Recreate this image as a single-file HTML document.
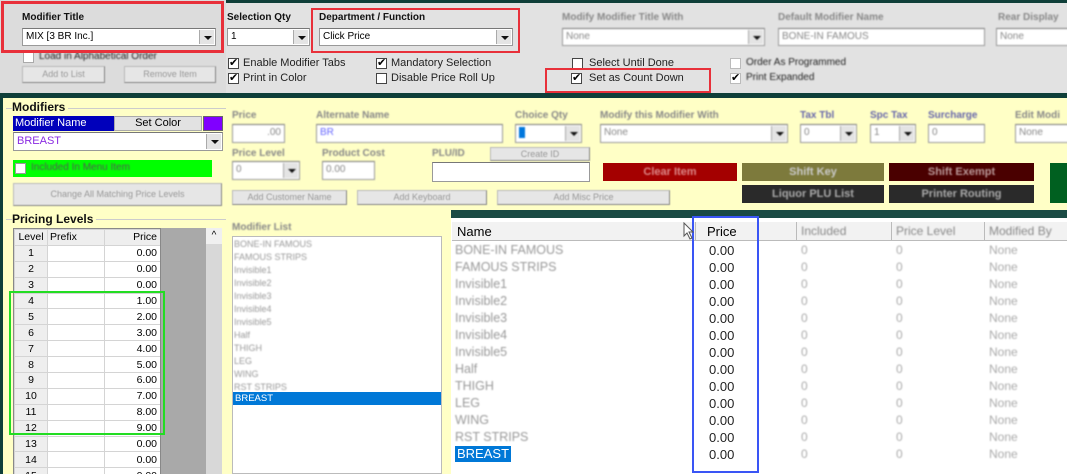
<!DOCTYPE html>
<html><head><meta charset="utf-8"><style>
*{box-sizing:border-box;margin:0;padding:0}
html{width:1067px;height:474px;overflow:hidden}
body{width:1067px;height:474px;overflow:hidden;background:#0f3f39;font-family:"Liberation Sans",sans-serif;font-size:11px;color:#000;position:relative}
.a{position:absolute}
.lbl{position:absolute;font-weight:bold;font-size:10px;color:#111}
.bl{filter:blur(0.7px);color:#888}
.box{position:absolute;background:#fff;border:1px solid #999;border-top-color:#777;font-size:10px;padding:2px 3px;white-space:nowrap;overflow:hidden}
.dd{position:absolute;right:1px;top:1px;bottom:1px;width:15px;background:#e4e4e4;border-left:1px solid #aaa}
.dd:after{content:"";position:absolute;left:4px;top:6px;border:4px solid transparent;border-top:4px solid #111}
.btn{position:absolute;background:#e6e6e6;border:1px solid #bbb;border-right-color:#888;border-bottom-color:#888;font-size:9px;color:#999;text-align:center;filter:blur(0.5px)}
.cb{position:absolute;width:11px;height:11px;border:1px solid #444;background:#fff}
.cb.on:after{content:"✔";position:absolute;left:0;top:-3px;font-size:11px;color:#000}
.ct{position:absolute;font-size:11px;color:#222}
.cbtn{position:absolute;color:#ccc;text-align:center;font-size:11px;font-weight:bold;filter:blur(0.8px);line-height:18px}
table{border-collapse:collapse;table-layout:fixed}
td{padding:0;height:15.9px;line-height:14px;border:1px solid #d4d4d4}
td.l{background:#eee;text-align:center}
td.p{text-align:right;padding-right:3px}
</style></head><body>
<div class="a" style="left:0;top:3px;width:1067px;height:90px;background:#e2e2e2"></div>
<div class="a" style="left:0;top:0;width:226px;height:93px;background:#dcdcdc"></div>
<div class="lbl" style="left:22px;top:12px">Modifier Title</div>
<div class="box" style="left:22px;top:28px;width:194px;height:18px">MIX [3 BR Inc.]<div class="dd"></div></div>
<div class="cb" style="left:23px;top:52px;border-color:#aaa"></div><div class="ct bl" style="left:39px;top:51px;font-size:10px">Load in Alphabetical Order</div>
<div class="btn" style="left:22px;top:66px;width:83px;height:17px;line-height:15px">Add to List</div>
<div class="btn" style="left:124px;top:66px;width:92px;height:17px;line-height:15px">Remove Item</div>
<div class="a" style="left:1px;top:1px;width:223px;height:52px;border:3px solid #e8303a"></div>

<div class="lbl" style="left:227px;top:12px">Selection Qty</div>
<div class="box" style="left:227px;top:28px;width:83px;height:18px">1<div class="dd"></div></div>
<div class="lbl" style="left:319px;top:12px">Department / Function</div>
<div class="box" style="left:319px;top:28px;width:194px;height:18px">Click Price<div class="dd"></div></div>
<div class="a" style="left:311px;top:8px;width:209px;height:45px;border:2px solid #e8303a"></div>

<div class="lbl bl" style="left:562px;top:12px">Modify Modifier Title With</div>
<div class="box bl" style="left:562px;top:28px;width:203px;height:18px">None<div class="dd"></div></div>
<div class="lbl bl" style="left:778px;top:12px">Default Modifier Name</div>
<div class="box bl" style="left:778px;top:28px;width:207px;height:18px">BONE-IN FAMOUS</div>
<div class="lbl bl" style="left:998px;top:12px">Rear Display</div>
<div class="box bl" style="left:996px;top:28px;width:75px;height:18px">None</div>

<div class="cb on" style="left:228px;top:58px"></div><div class="ct" style="left:243px;top:57px">Enable Modifier Tabs</div>
<div class="cb on" style="left:228px;top:73px"></div><div class="ct" style="left:243px;top:72px">Print in Color</div>
<div class="cb on" style="left:376px;top:58px"></div><div class="ct" style="left:391px;top:57px">Mandatory Selection</div>
<div class="cb" style="left:376px;top:73px"></div><div class="ct" style="left:391px;top:72px">Disable Price Roll Up</div>
<div class="cb" style="left:572px;top:58px"></div><div class="ct" style="left:589px;top:57px">Select Until Done</div>
<div class="cb on" style="left:571px;top:73px"></div><div class="ct" style="left:589px;top:72px">Set as Count Down</div>
<div class="a" style="left:545px;top:68px;width:166px;height:25px;border:2px solid #e8303a"></div>
<div class="cb" style="left:730px;top:58px;border-color:#bbb"></div><div class="ct bl" style="left:746px;top:57px;font-size:10px">Order As Programmed</div>
<div class="cb on" style="left:730px;top:73px;border-color:#bbb;color:#999"></div><div class="ct bl" style="left:746px;top:72px;font-size:10px">Print Expanded</div>

<div class="a" style="left:3px;top:98px;width:225px;height:376px;background:#ffffc6"></div>
<div class="a" style="left:6px;top:108px;width:220px;height:1px;background:#ccc"></div>
<div class="lbl" style="left:12px;top:100px;font-size:12px;background:#ffffc6;padding-right:3px">Modifiers</div>
<div class="a" style="left:13px;top:116px;width:101px;height:15px;background:#0000bb;color:#fff;font-size:11px;padding-left:2px;line-height:15px">Modifier Name</div>
<div class="a" style="left:114px;top:116px;width:88px;height:15px;background:#e2e2e2;border:1px solid #aaa;font-size:11px;text-align:center;line-height:13px">Set Color</div>
<div class="a" style="left:203px;top:116px;width:20px;height:15px;background:#8000ff;border:1px solid #666"></div>
<div class="box" style="left:13px;top:132px;width:210px;height:19px;color:#8a2be2;font-size:11px">BREAST<div class="dd"></div></div>
<div class="a" style="left:13px;top:160px;width:199px;height:17px;background:#00ff00"></div>
<div class="cb" style="left:15px;top:163px;border-color:#999"></div>
<div class="ct bl" style="left:31px;top:162px;font-size:10px;color:#555">Included In Menu Item</div>
<div class="btn" style="left:13px;top:183px;width:209px;height:23px;line-height:21px">Change All Matching Price Levels</div>
<div class="a" style="left:6px;top:219px;width:220px;height:1px;background:#ccc"></div>
<div class="lbl" style="left:12px;top:212px;font-size:12px;background:#ffffc6;padding-right:3px">Pricing Levels</div>
<div class="a" style="left:160px;top:228px;width:46px;height:246px;background:#a9a9a9"></div>
<div class="a" style="left:206px;top:228px;width:16px;height:246px;background:#d8d8d8"></div>
<div class="a" style="left:206px;top:228px;width:16px;height:16px;background:#f0f0f0;text-align:center;font-size:10px;line-height:16px">^</div>
<div class="a" style="left:13px;top:228px;width:148px;height:246px;overflow:hidden;background:#fff;border:1px solid #888;border-bottom:none">
<table style="width:147px;font-size:10.5px">
<colgroup><col style="width:33px"><col style="width:57px"><col></colgroup>
<tr style="background:#eee"><td class="l">Level</td><td style="padding-left:2px">Prefix</td><td class="p">Price</td></tr>
<tr><td class="l">1</td><td></td><td class="p">0.00</td></tr>
<tr><td class="l">2</td><td></td><td class="p">0.00</td></tr>
<tr><td class="l">3</td><td></td><td class="p">0.00</td></tr>
<tr><td class="l">4</td><td></td><td class="p">1.00</td></tr>
<tr><td class="l">5</td><td></td><td class="p">2.00</td></tr>
<tr><td class="l">6</td><td></td><td class="p">3.00</td></tr>
<tr><td class="l">7</td><td></td><td class="p">4.00</td></tr>
<tr><td class="l">8</td><td></td><td class="p">5.00</td></tr>
<tr><td class="l">9</td><td></td><td class="p">6.00</td></tr>
<tr><td class="l">10</td><td></td><td class="p">7.00</td></tr>
<tr><td class="l">11</td><td></td><td class="p">8.00</td></tr>
<tr><td class="l">12</td><td></td><td class="p">9.00</td></tr>
<tr><td class="l">13</td><td></td><td class="p">0.00</td></tr>
<tr><td class="l">14</td><td></td><td class="p">0.00</td></tr>
<tr><td class="l">15</td><td></td><td class="p">0.00</td></tr>
</table></div>
<div class="a" style="left:9px;top:291px;width:156px;height:144px;border:2px solid #22dd22"></div>

<div class="a" style="left:228px;top:98px;width:839px;height:112px;background:#ffffc6"></div>
<div class="a" style="left:228px;top:210px;width:223px;height:264px;background:#ffffc6"></div>
<div class="a" style="left:451px;top:210px;width:616px;height:8px;background:#1a4a44"></div>
<div class="lbl bl" style="left:232px;top:110px">Price</div>
<div class="box bl" style="left:232px;top:124px;width:53px;height:19px;text-align:right">.00</div>
<div class="lbl bl" style="left:316px;top:110px">Alternate Name</div>
<div class="box bl" style="left:316px;top:124px;width:187px;height:19px;color:#66f">BR</div>
<div class="lbl bl" style="left:515px;top:110px">Choice Qty</div>
<div class="box bl" style="left:515px;top:124px;width:67px;height:19px"><span style="background:#07d;color:#07d">1</span><div class="dd"></div></div>
<div class="lbl bl" style="left:600px;top:110px">Modify this Modifier With</div>
<div class="box bl" style="left:600px;top:124px;width:188px;height:19px">None<div class="dd"></div></div>
<div class="lbl bl" style="left:800px;top:110px;color:#66a">Tax Tbl</div>
<div class="box bl" style="left:800px;top:124px;width:57px;height:19px">0<div class="dd"></div></div>
<div class="lbl bl" style="left:870px;top:110px;color:#66a">Spc Tax</div>
<div class="box bl" style="left:870px;top:124px;width:46px;height:19px">1<div class="dd"></div></div>
<div class="lbl bl" style="left:928px;top:110px;color:#66a">Surcharge</div>
<div class="box bl" style="left:928px;top:124px;width:57px;height:19px">0</div>
<div class="lbl bl" style="left:1015px;top:110px">Edit Modi</div>
<div class="box bl" style="left:1015px;top:124px;width:60px;height:19px">None</div>

<div class="lbl bl" style="left:232px;top:148px">Price Level</div>
<div class="box bl" style="left:232px;top:161px;width:68px;height:19px">0<div class="dd"></div></div>
<div class="lbl bl" style="left:322px;top:148px">Product Cost</div>
<div class="box bl" style="left:322px;top:161px;width:53px;height:19px">0.00</div>
<div class="lbl bl" style="left:432px;top:148px">PLU/ID</div>
<div class="btn" style="left:490px;top:147px;width:100px;height:14px;line-height:12px">Create ID</div>
<div class="box" style="left:432px;top:162px;width:158px;height:20px"></div>
<div class="btn" style="left:232px;top:190px;width:115px;height:15px;line-height:13px">Add Customer Name</div>
<div class="btn" style="left:357px;top:190px;width:130px;height:15px;line-height:13px">Add Keyboard</div>
<div class="btn" style="left:497px;top:190px;width:173px;height:15px;line-height:13px">Add Misc Price</div>

<div class="a" style="left:603px;top:163px;width:134px;height:18px;background:#a40000"></div><div class="cbtn" style="left:603px;top:163px;width:134px;color:#d88">Clear Item</div>
<div class="a" style="left:742px;top:163px;width:142px;height:18px;background:#7d7a3c"></div><div class="cbtn" style="left:742px;top:163px;width:142px">Shift Key</div>
<div class="a" style="left:889px;top:163px;width:145px;height:18px;background:#4a0000"></div><div class="cbtn" style="left:889px;top:163px;width:145px;color:#b99">Shift Exempt</div>
<div class="a" style="left:742px;top:185px;width:142px;height:18px;background:#2a2a2a"></div><div class="cbtn" style="left:742px;top:185px;width:142px;color:#aaa">Liquor PLU List</div>
<div class="a" style="left:889px;top:185px;width:145px;height:18px;background:#2a2a2a"></div><div class="cbtn" style="left:889px;top:185px;width:145px;color:#aaa">Printer Routing</div>
<div class="a" style="left:1050px;top:163px;width:17px;height:40px;background:#006020"></div>

<div class="lbl bl" style="left:232px;top:222px">Modifier List</div>
<div class="a" style="left:232px;top:236px;width:210px;height:238px;background:#fff;border:1px solid #bbb"></div>
<div class="a bl" style="left:234px;top:238px;font-size:9px;line-height:13px;color:#999">BONE-IN FAMOUS<br>FAMOUS STRIPS<br>Invisible1<br>Invisible2<br>Invisible3<br>Invisible4<br>Invisible5<br>Half<br>THIGH<br>LEG<br>WING<br>RST STRIPS</div>
<div class="a" style="left:233px;top:392px;width:208px;height:13px;background:#0078d7;color:#fff;font-size:9.5px;padding-left:2px;line-height:13px">BREAST</div>

<div class="a" style="left:451px;top:218px;width:616px;height:256px;background:#fff"></div>
<div class="a" style="left:452px;top:222px;width:615px;height:19px;background:#f2f2f2;border-bottom:1px solid #bbb"></div>
<div class="a" style="left:457px;top:224px;font-size:13px">Name</div>
<div class="a" style="left:695px;top:222px;width:1px;height:19px;background:#bbb"></div>
<div class="a" style="left:707px;top:224px;font-size:13px">Price</div>
<div class="a" style="left:796px;top:222px;width:1px;height:19px;background:#bbb"></div>
<div class="a bl" style="left:801px;top:224px;font-size:12px">Included</div>
<div class="a" style="left:891px;top:222px;width:1px;height:19px;background:#bbb"></div>
<div class="a bl" style="left:896px;top:224px;font-size:12px">Price Level</div>
<div class="a" style="left:984px;top:222px;width:1px;height:19px;background:#bbb"></div>
<div class="a bl" style="left:989px;top:224px;font-size:12px">Modified By</div>
<div class="a bl" style="left:455px;top:242px;font-size:12.5px;line-height:17px;color:#999">BONE-IN FAMOUS<br>FAMOUS STRIPS<br>Invisible1<br>Invisible2<br>Invisible3<br>Invisible4<br>Invisible5<br>Half<br>THIGH<br>LEG<br>WING<br>RST STRIPS</div>
<div class="a" style="left:455px;top:446px;font-size:13px;background:#0078d7;color:#fff;padding:0 2px;line-height:16px">BREAST</div>
<div class="a" style="left:709px;top:242px;font-size:13px;line-height:17px;color:#222">0.00<br>0.00<br>0.00<br>0.00<br>0.00<br>0.00<br>0.00<br>0.00<br>0.00<br>0.00<br>0.00<br>0.00<br>0.00</div>
<div class="a bl" style="left:801px;top:242px;font-size:12px;line-height:17px;color:#aaa">0<br>0<br>0<br>0<br>0<br>0<br>0<br>0<br>0<br>0<br>0<br>0<br>0</div>
<div class="a bl" style="left:896px;top:242px;font-size:12px;line-height:17px;color:#aaa">0<br>0<br>0<br>0<br>0<br>0<br>0<br>0<br>0<br>0<br>0<br>0<br>0</div>
<div class="a bl" style="left:989px;top:242px;font-size:12px;line-height:17px;color:#aaa">None<br>None<br>None<br>None<br>None<br>None<br>None<br>None<br>None<br>None<br>None<br>None<br>None</div>
<div class="a" style="left:692px;top:216px;width:67px;height:257px;border:2px solid #3a55f5"></div>
<svg class="a" style="left:683px;top:222px" width="12" height="18"><path d="M1 1 L1 14 L4 11 L7 17 L9 16 L6 10 L10 10 Z" fill="#fff" stroke="#555" stroke-width="1"/></svg>
</body></html>
